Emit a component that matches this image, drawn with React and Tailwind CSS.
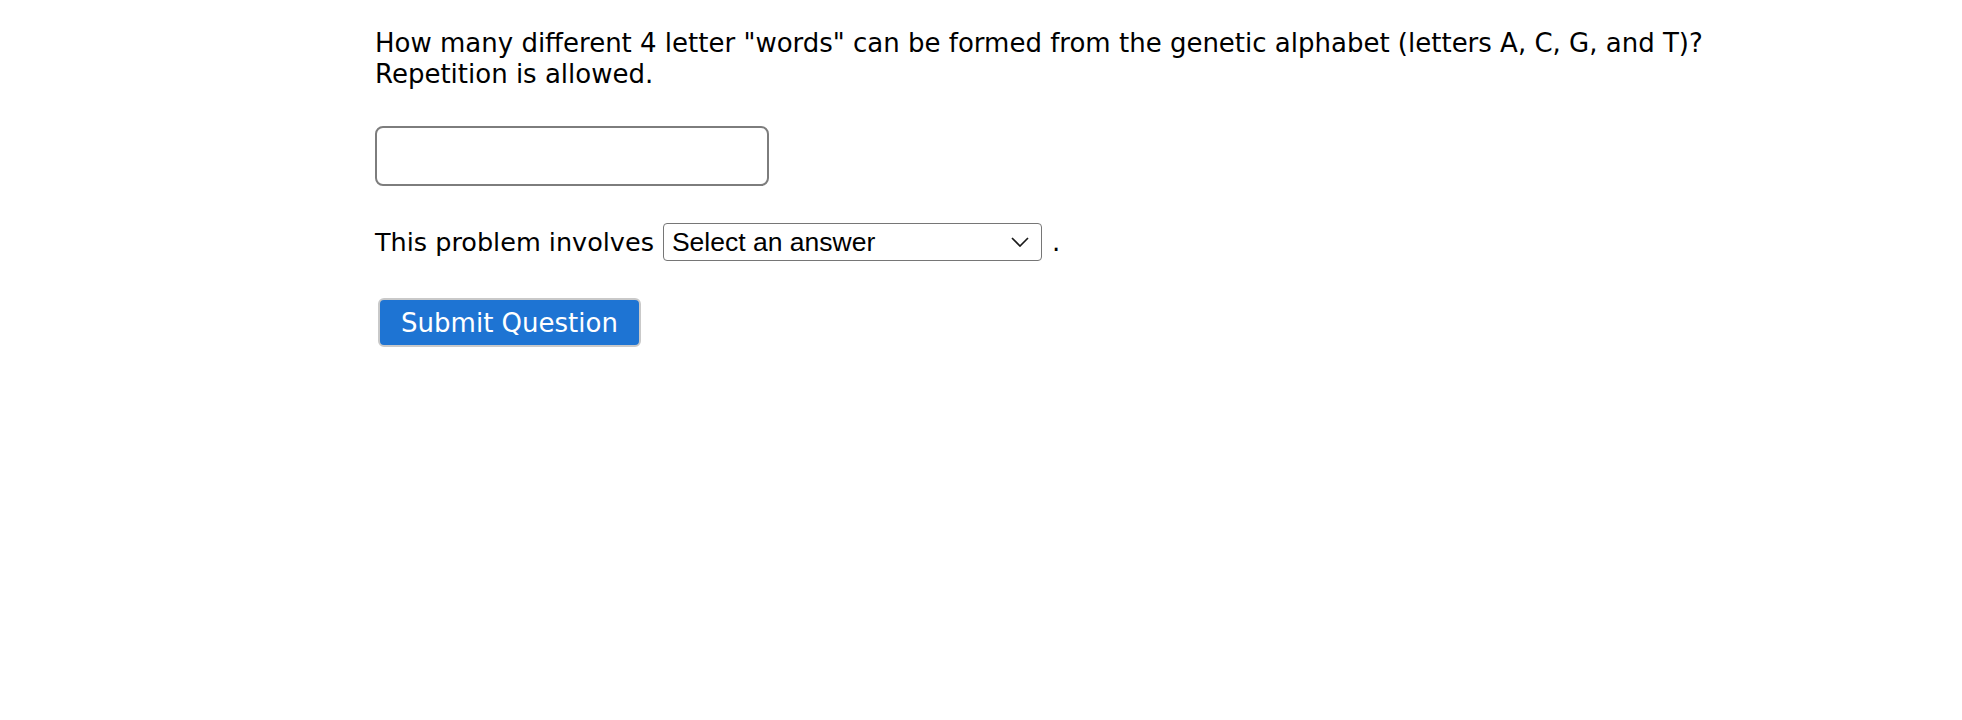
import { useState } from "react";

// Question page: prompt text, numeric answer box, "involves" dropdown and submit button
export default function App() {
  const [answer, setAnswer] = useState("");
  const [kind, setKind] = useState("");

  return (
    <div className="min-h-screen bg-white font-['DejaVu_Sans',sans-serif] text-black">
      <div className="pl-[375px] pt-[28px]">
        <p className="text-[26px] leading-[31px]">
          How many different 4 letter "words" can be formed from the genetic alphabet (letters A, C, G, and T)?
          <br />
          Repetition is allowed.
        </p>

        <input
          type="text"
          value={answer}
          onChange={(e) => setAnswer(e.target.value)}
          aria-label="Answer"
          className="mt-[36px] block h-[60px] w-[394px] rounded-[8px] border-2 border-[#7d7d7d] bg-white px-2 text-[26px] outline-none"
        />

        <div className="mt-[37px] flex items-center text-[26px] leading-[31px]">
          <span className="text-[25.5px]">This problem involves</span>
          <div className="relative ml-[9px] h-[38px] w-[379px]">
            <select
              value={kind}
              onChange={(e) => setKind(e.target.value)}
              className="h-full w-full appearance-none rounded-[4px] border-[1.5px] border-[#767676] bg-white pl-[8px] font-['Liberation_Sans',Arial,sans-serif] text-[26.5px] text-black outline-none"
            >
              <option value="">Select an answer</option>
              <option value="perm">Permutations</option>
              <option value="comb">Combinations</option>
              <option value="neither">Neither</option>
            </select>
            <svg
              className="pointer-events-none absolute right-[13px] top-[14px]"
              width="18"
              height="10"
              viewBox="0 0 18 10"
              fill="none"
              stroke="#1a1a1a"
              strokeWidth="1.7"
            >
              <path d="M1 1 L9 9 L17 1" />
            </svg>
          </div>
          <span className="ml-[10px]">.</span>
        </div>

        <button
          type="button"
          className="ml-[3px] mt-[37px] block h-[49px] w-[263px] rounded-[6px] border-2 border-[#c9c9c9] bg-[#1e74d3] text-[26px] leading-none text-white"
        >
          Submit Question
        </button>
      </div>
    </div>
  );
}
